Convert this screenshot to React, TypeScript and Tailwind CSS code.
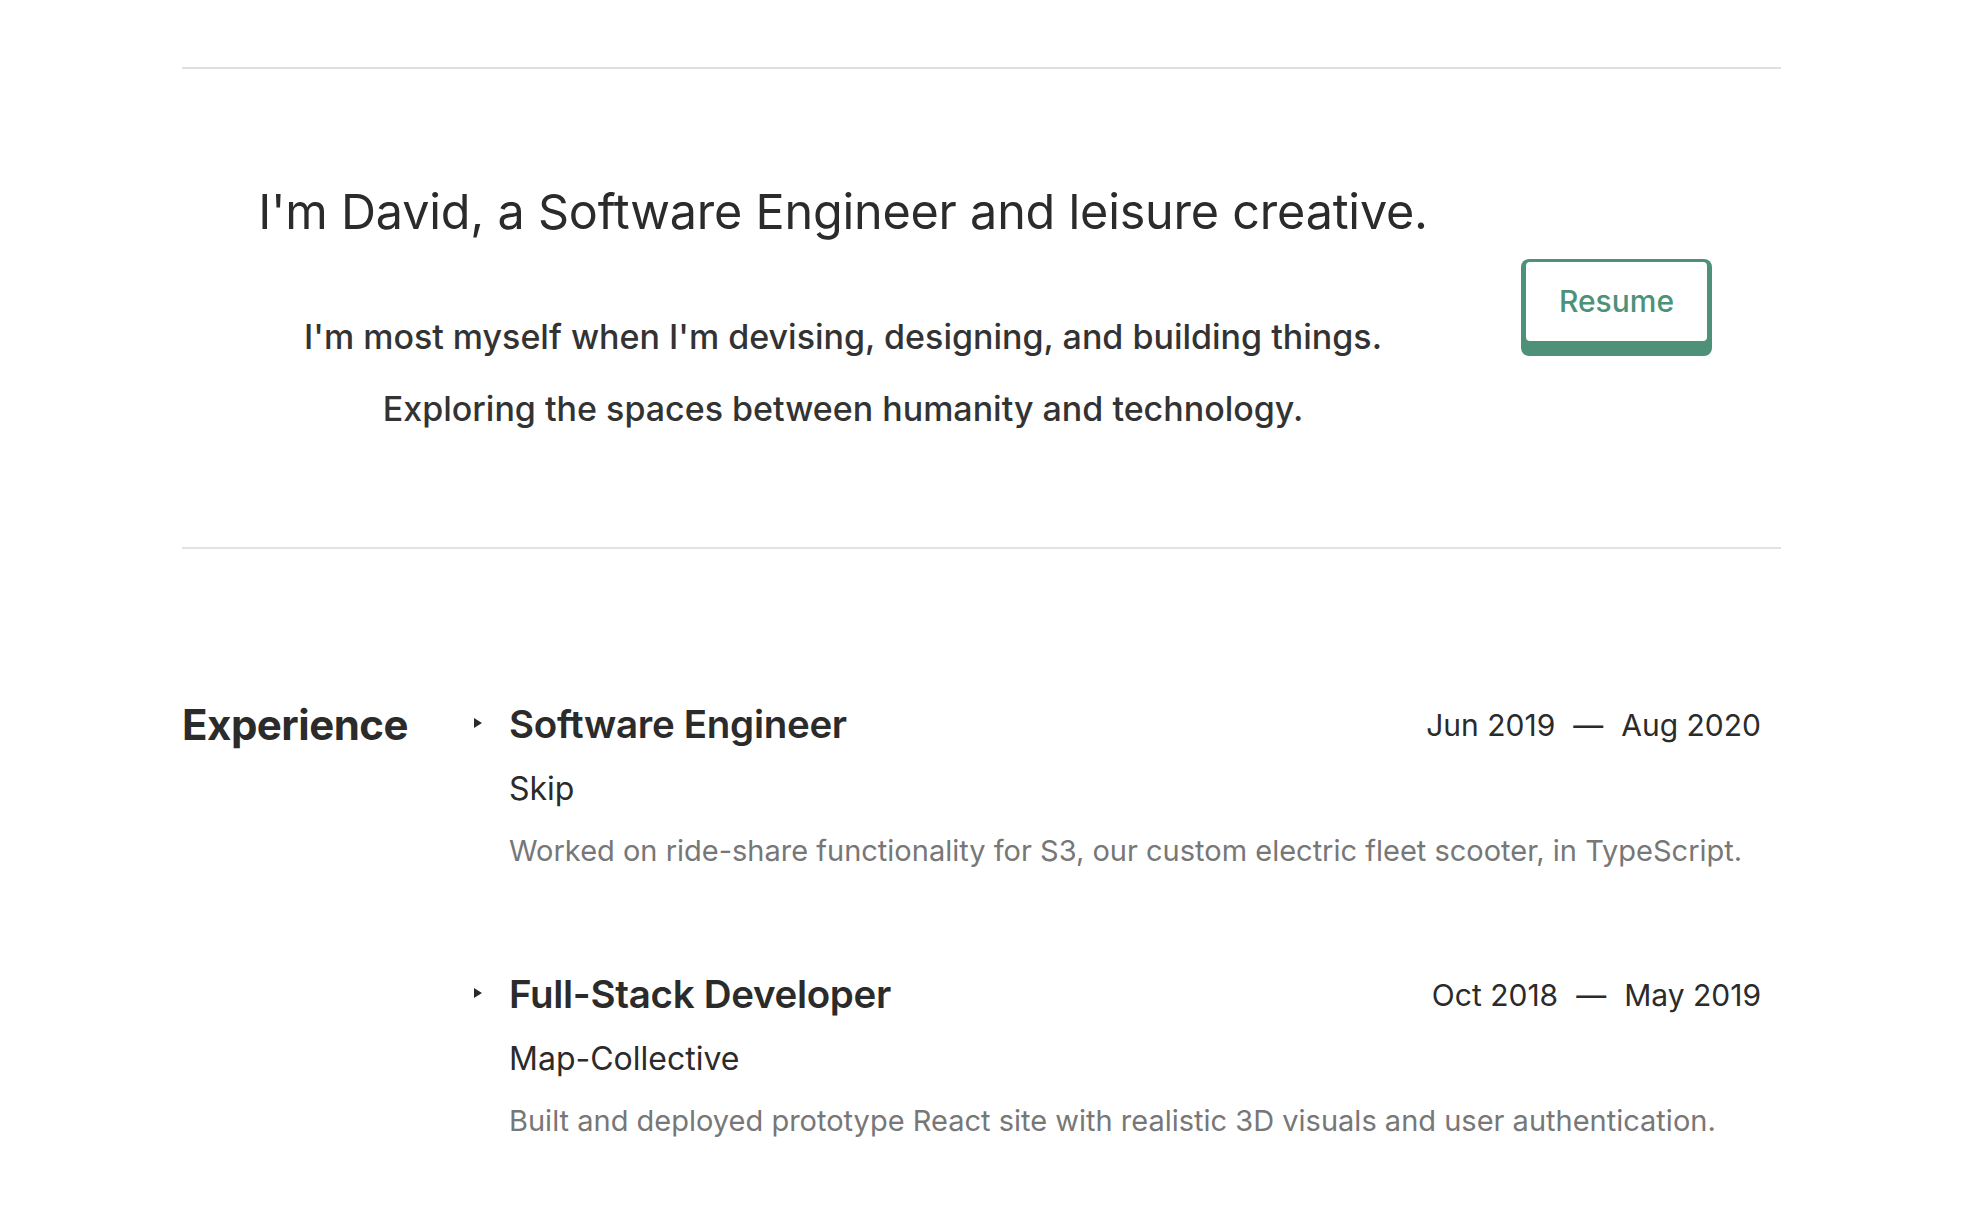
export default function App() {
  const font = { fontFamily: 'Inter, "Noto Sans", sans-serif' };
  const jobs = [
    { t: "Software Engineer", c: "Skip", d: "Worked on ride-share functionality for S3, our custom electric fleet scooter, in TypeScript.", a: "Jun 2019", b: "Aug 2020" },
    { t: "Full-Stack Developer", c: "Map-Collective", d: "Built and deployed prototype React site with realistic 3D visuals and user authentication.", a: "Oct 2018", b: "May 2019" },
  ];
  return (
    <div style={font} className="bg-white w-[1975px] h-[1215px] overflow-hidden text-[#2b2b2b]">
      <div className="ml-[182px] w-[1599px] pt-[67px]">
        <div className="border-t-2 border-[#e3e0dc]" />
        <div className="flex h-[478px]">
          <div className="w-[1322px] flex flex-col items-center pt-[113px]">
            <h1 className="text-[48.5px] leading-[60px] font-normal tracking-[-0.2px]">I'm David, a Software Engineer and leisure creative.</h1>
            <p className="mt-[75px] text-[34px] leading-[40px] font-medium text-[#333]">I'm most myself when I'm devising, designing, and building things.</p>
            <p className="mt-[32px] text-[34px] leading-[40px] font-medium text-[#333]">Exploring the spaces between humanity and technology.</p>
          </div>
          <div className="pt-[190px] pl-[17px]">
            <div className="w-[191px] h-[97px] rounded-[8px] bg-[#4e9179] pt-[1px] px-[3px]">
              <div className="h-[83px] rounded-[6px] bg-white border-2 border-[#4e9179] flex items-center justify-center text-[30px] font-medium text-[#4e9179]">Resume</div>
            </div>
          </div>
        </div>
        <div className="border-t-2 border-[#e6dfe3]" />
        <div className="flex pt-[148px]">
          <div className="w-[286px] text-[42px] font-bold leading-[56px] tracking-[-0.5px]">Experience</div>
          <div className="flex-1 pr-[20px] flex flex-col gap-[96px]">
            {jobs.map((j) => (
              <div key={j.t} className="flex">
                <div className="w-[41px] pt-[20px] pl-[5px]">
                  <svg width="10" height="12" viewBox="0 0 10 12"><path d="M1 1 L9 6 L1 11 Z" fill="#2b2b2b" /></svg>
                </div>
                <div className="flex-1">
                  <div className="flex justify-between items-center h-[56px]">
                    <div className="text-[38.5px] font-semibold tracking-[-0.3px]">{j.t}</div>
                    <div className="text-[30px] flex gap-[18px]"><span>{j.a}</span><span>—</span><span>{j.b}</span></div>
                  </div>
                  <div className="text-[32px] leading-[42px] mt-[15px]">{j.c}</div>
                  <div className="text-[29px] leading-[40px] mt-[21px] text-[#777]">{j.d}</div>
                </div>
              </div>
            ))}
          </div>
        </div>
      </div>
    </div>
  );
}
